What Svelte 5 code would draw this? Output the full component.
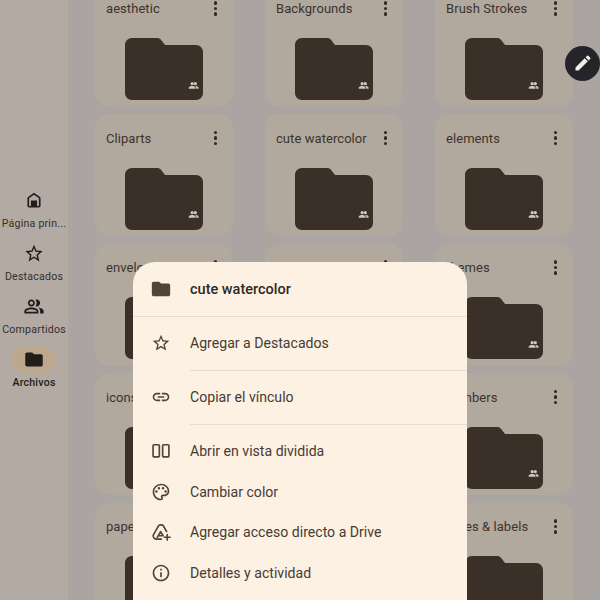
<script>
  const folders = ['aesthetic','Backgrounds','Brush Strokes','Cliparts','cute watercolor','elements','envelopes','','themes','icons','','numbers','papers','','notes & labels'];
  const nav = [
    { label: 'Página prin...', icon: 'home' },
    { label: 'Destacados', icon: 'star' },
    { label: 'Compartidos', icon: 'people' },
    { label: 'Archivos', icon: 'folder', active: true }
  ];
  const paths = {
    star: 'M22 9.24l-7.19-.62L12 2 9.19 8.63 2 9.24l5.46 4.73L5.82 21 12 17.27 18.18 21l-1.63-7.03L22 9.24zM12 15.4l-3.76 2.27 1-4.28-3.32-2.88 4.38-.38L12 6.1l1.71 4.04 4.38.38-3.32 2.88 1 4.28L12 15.4z',
    home: 'M12 3 5.500 7.600c-.6.4-1 1.100-1 1.900V18c0 1.100.9 2 2 2h11c1.100 0 2-.9 2-2V9.500c0-.8-.4-1.500-1-1.900L12 3zm0 2.300 5.400 3.800c.1.100.2.200.2.400V18c0 .1-.1.200-.2.200h-1.900v-6.200h-7v6.200H6.600c-.1 0-.2-.1-.2-.2V9.500c0-.2.1-.3.2-.4L12 5.300z',
    people: 'M16.67 13.13C18.04 14.06 19 15.32 19 17v3h4v-3c0-2.18-3.57-3.47-6.33-3.87zM15 12c2.21 0 4-1.79 4-4s-1.79-4-4-4c-.47 0-.91.1-1.33.24C14.5 5.27 15 6.58 15 8s-.5 2.73-1.33 3.76c.42.14.86.24 1.33.24zM9 12c2.21 0 4-1.79 4-4s-1.79-4-4-4-4 1.79-4 4 1.79 4 4 4zm0-6c1.1 0 2 .9 2 2s-.9 2-2 2-2-.9-2-2 .9-2 2-2zM9 13c-2.67 0-8 1.34-8 4v3h16v-3c0-2.66-5.33-4-8-4zm6 5H3v-.99C3.2 16.29 6.3 15 9 15s5.8 1.29 6 2z',
    peopleFilled: 'M9 11.500a3.500 3.500 0 1 0 0-7 3.500 3.500 0 0 0 0 7zm7 0a3.500 3.500 0 1 0 0-7 3.500 3.500 0 0 0 0 7zM9 13c-3 0-7.500 1.300-7.500 3.800V19h15v-2.200C16.500 14.300 12 13 9 13zm7.500 0c-.4 0-.8 0-1.200.1 1.500.9 2.700 2.100 2.700 3.700V19h5v-2.200c0-2.500-3.500-3.800-6.500-3.800z',
    folder: 'M10 4H4c-1.1 0-1.99.9-1.99 2L2 18c0 1.1.9 2 2 2h16c1.1 0 2-.9 2-2V8c0-1.1-.9-2-2-2h-8l-2-2z',
    link: 'M3.9 12c0-1.71 1.39-3.1 3.1-3.1h4V7H7c-2.76 0-5 2.24-5 5s2.24 5 5 5h4v-1.9H7c-1.71 0-3.1-1.39-3.1-3.1zM8 13h8v-2H8v2zm9-6h-4v1.9h4c1.71 0 3.1 1.39 3.1 3.1s-1.39 3.1-3.1 3.1h-4V17h4c2.76 0 5-2.24 5-5s-2.24-5-5-5z',
    palette: 'M12 22C6.49 22 2 17.51 2 12S6.49 2 12 2s10 4.04 10 9c0 3.31-2.69 6-6 6h-1.77c-.28 0-.5.22-.5.5 0 .12.05.23.13.33.41.47.64 1.06.64 1.67A2.5 2.5 0 0 1 12 22zm0-18c-4.41 0-8 3.59-8 8s3.59 8 8 8c.28 0 .5-.22.5-.5a.54.54 0 0 0-.14-.35c-.41-.46-.63-1.05-.63-1.65a2.5 2.5 0 0 1 2.5-2.5H16c2.21 0 4-1.79 4-4 0-3.86-3.59-7-8-7zM6.5 10a1.5 1.5 0 1 0 0 3 1.5 1.5 0 0 0 0-3zm3-4a1.5 1.5 0 1 0 0 3 1.5 1.5 0 0 0 0-3zm5 0a1.5 1.5 0 1 0 0 3 1.5 1.5 0 0 0 0-3zm3 4a1.5 1.5 0 1 0 0 3 1.5 1.5 0 0 0 0-3z',
    info: 'M11 7h2v2h-2zm0 4h2v6h-2zm1-9C6.48 2 2 6.48 2 12s4.48 10 10 10 10-4.48 10-10S17.52 2 12 2zm0 18c-4.41 0-8-3.59-8-8s3.59-8 8-8 8 3.59 8 8-3.59 8-8 8z'
  };
  const tall = [
    { icon: 'star', label: 'Agregar a Destacados' },
    { icon: 'link', label: 'Copiar el vínculo' }
  ];
  const short = [
    { icon: 'split', label: 'Abrir en vista dividida' },
    { icon: 'palette', label: 'Cambiar color' },
    { icon: 'drive', label: 'Agregar acceso directo a Drive' },
    { icon: 'info', label: 'Detalles y actividad' }
  ];
</script>

<div class="page">
  <nav class="rail">
    {#each nav as item}
      <div class="nav-item" class:active={item.active}>
        <span class="nav-icon">
          <svg viewBox="0 0 24 24" width="21" height="21"><path d={paths[item.icon]} /></svg>
        </span>
        <span class="nav-label">{item.label}</span>
      </div>
    {/each}
  </nav>

  <main class="grid">
    {#each folders as name}
      <article class="card">
        <header class="card-head">
          <span class="card-title">{name}</span>
          <span class="dots"><i></i><i></i><i></i></span>
        </header>
        <div class="folder">
          <svg class="folder-shape" viewBox="0 0 78 62" width="78" height="62">
            <path d="M7 0h25c1.600 0 3 .6 4 1.800L40 7h31c3.900 0 7 3.100 7 7v41c0 3.900-3.100 7-7 7H7c-3.900 0-7-3.100-7-7V7c0-3.900 3.100-7 7-7z" />
          </svg>
          <svg class="shared" viewBox="0 0 24 24" width="11" height="11"><path d={paths.peopleFilled} /></svg>
        </div>
      </article>
    {/each}
  </main>

  <button class="fab" aria-label="Editar">
    <svg viewBox="0 0 24 24" width="20" height="20"><path d="M3 17.25V21h3.75L17.81 9.94l-3.75-3.75L3 17.25zM20.71 7.04a.996.996 0 0 0 0-1.41l-2.34-2.34a.996.996 0 0 0-1.41 0l-1.83 1.83 3.75 3.75 1.83-1.83z" /></svg>
  </button>

  <section class="sheet">
    <div class="sheet-head">
      <svg viewBox="0 0 24 24" width="22" height="22"><path d={paths.folder} /></svg>
      <span>cute watercolor</span>
    </div>
    {#each tall as row}
      <div class="row tall">
        <svg viewBox="0 0 24 24" width="20" height="20"><path d={paths[row.icon]} /></svg>
        <span>{row.label}</span>
      </div>
    {/each}
    <div class="short-list">
      {#each short as row}
        <div class="row short">
          {#if row.icon === 'drive'}
            <svg class="stroked" viewBox="0 0 24 24" width="20" height="20">
              <path d="M12.500 20.500H6c-1 0-1.800-.5-2.300-1.300l-.8-1.400c-.4-.8-.4-1.700 0-2.400L8.800 5c.5-.9 1.300-1.500 2.300-1.500h1.500c1 0 1.800.5 2.300 1.300l3.800 6.600" />
              <path d="M7.500 18.500 11.500 11.500 14.500 16.500H9.500" />
              <path d="M19.500 15v6.500M16 18.300h7" />
            </svg>
          {:else if row.icon === 'split'}
            <svg class="stroked" viewBox="0 0 24 24" width="20" height="20">
              <rect x="2.500" y="4.500" width="7.500" height="14.500" rx="1" />
              <rect x="14" y="4.500" width="7.500" height="14.500" rx="1" />
            </svg>
          {:else}
            <svg viewBox="0 0 24 24" width="20" height="20"><path d={paths[row.icon]} /></svg>
          {/if}
          <span>{row.label}</span>
        </div>
      {/each}
    </div>
  </section>
</div>

<style>
  :global(body) { margin: 0; }
  .page {
    position: relative;
    width: 600px;
    height: 600px;
    overflow: hidden;
    display: flex;
    background: #aaa4a3;
    font-family: Roboto, "Liberation Sans", sans-serif;
    color: #3a3128;
  }
  .rail {
    width: 68px;
    flex: none;
    box-sizing: border-box;
    padding-top: 187px;
    background: #b3aaa3;
    display: flex;
    flex-direction: column;
  }
  .nav-item {
    height: 53px;
    display: flex;
    flex-direction: column;
    align-items: center;
  }
  .nav-icon {
    width: 44px;
    height: 27px;
    border-radius: 14px;
    display: flex;
    align-items: center;
    justify-content: center;
    transform: translateX(-0.5px);
  }
  .nav-icon svg { fill: #211d1b; }
  .active .nav-icon { background: #bba88f; }
  .nav-label {
    font-size: 10.6px;
    line-height: 14px;
    margin-top: 3px;
    color: #352f2b;
    white-space: nowrap;
    letter-spacing: 0.02em;
  }
  .active .nav-label { font-weight: 500; color: #211d1b; }
  .grid {
    margin: -15.5px 0 0 27px;
    display: grid;
    grid-template-columns: repeat(3, 138px);
    grid-auto-rows: 122px;
    column-gap: 32px;
    row-gap: 7.5px;
  }
  .card {
    background: #b1a89e;
    border-radius: 14px;
    padding: 0 11px;
    display: flex;
    flex-direction: column;
  }
  .card-head {
    display: flex;
    justify-content: space-between;
    align-items: center;
    height: 48px;
    font-size: 13px;
    color: #3c342d;
  }
  .card-title { letter-spacing: 0.005em; }
  .dots {
    display: flex;
    flex-direction: column;
    gap: 2px;
    margin: 0 5px 0 auto;
  }
  .dots i {
    width: 3.4px;
    height: 3.4px;
    border-radius: 50%;
    background: #2e2823;
  }
  .folder {
    position: relative;
    width: 78px;
    height: 62px;
    margin: 5.5px 0 0 19px;
  }
  .folder-shape { display: block; fill: #3a3028; }
  .shared {
    position: absolute;
    right: 4.5px;
    bottom: 9.5px;
    fill: #cfc8c0;
  }
  .fab {
    position: absolute;
    left: 565px;
    top: 45.5px;
    width: 35px;
    height: 35px;
    padding: 0;
    border: 0;
    border-radius: 50%;
    background: #24242a;
    display: flex;
    align-items: center;
    justify-content: center;
  }
  .fab svg { fill: #f2eeea; }
  .sheet {
    position: absolute;
    left: 133px;
    top: 262px;
    width: 334px;
    height: 338px;
    background: #fdf1e4;
    border-radius: 22px 22px 0 0;
    overflow: hidden;
  }
  .sheet svg { fill: #50453a; flex: none; margin-left: 18px; }
  .sheet .stroked { fill: none; stroke: #50453a; stroke-width: 2; stroke-linejoin: round; stroke-linecap: round; }
  .sheet-head, .row {
    display: flex;
    align-items: center;
    gap: 19px;
  }
  .sheet-head {
    height: 55px;
    box-sizing: border-box;
    border-bottom: 1px solid #e6dccf;
    font-size: 14.5px;
    font-weight: 500;
    color: #2f2923;
    gap: 18px;
  }
  .sheet-head svg { margin-left: 17px; }
  .row { font-size: 14.1px; color: #453c33; }
  .tall { position: relative; height: 54px; box-sizing: border-box; padding-bottom: 2px; }
  .tall::after {
    content: "";
    position: absolute;
    left: 57px;
    right: 0;
    bottom: 0;
    height: 1px;
    background: #e6dccf;
  }
  .short-list { padding-top: 6px; }
  .short { height: 40.5px; }
</style>
